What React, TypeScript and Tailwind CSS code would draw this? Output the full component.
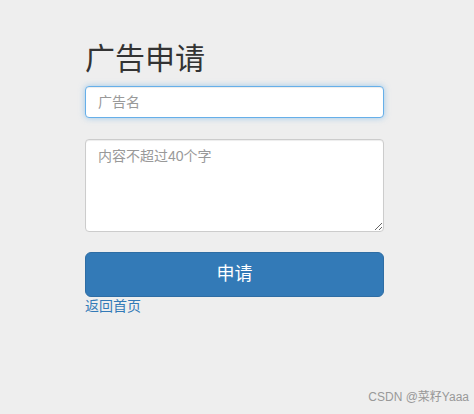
export default function App() {
  return (
    <div className="relative h-[414px] w-[474px] bg-[#eeeeee] font-['Liberation_Sans','Noto_Sans_CJK_SC',sans-serif] text-[#333]">
      <div className="flex w-[299px] flex-col pl-0 ml-[85px] pt-[39px]">
        <h1 className="text-[30px] leading-[40px] text-[#333]">广告申请</h1>
        <input
          className="mt-[7px] h-[32px] w-full rounded-[4px] border border-[#66afe9] bg-white px-[12px] text-[14px] outline-none shadow-[inset_0_1px_1px_rgba(0,0,0,0.075),0_0_6px_rgba(102,175,233,0.6)] placeholder:text-[#999]"
          placeholder="广告名"
        />
        <textarea
          className="mt-[21px] h-[93px] w-full rounded-[4px] border border-[#ccc] bg-white px-[12px] py-[6px] text-[14px] outline-none shadow-[inset_0_1px_1px_rgba(0,0,0,0.075)] placeholder:text-[#999]"
          placeholder="内容不超过40个字"
        />
        <button className="mt-[20px] h-[45px] w-full rounded-[6px] border border-[#2e6da4] bg-[#337ab7] text-[18px] text-white">
          申请
        </button>
        <a href="#" className="self-start text-[14px] leading-[18px] text-[#337ab7]">
          返回首页
        </a>
      </div>
      <div className="absolute bottom-[8px] right-[5px] text-[12px] text-[#999]">CSDN @菜籽Yaaa</div>
    </div>
  );
}
